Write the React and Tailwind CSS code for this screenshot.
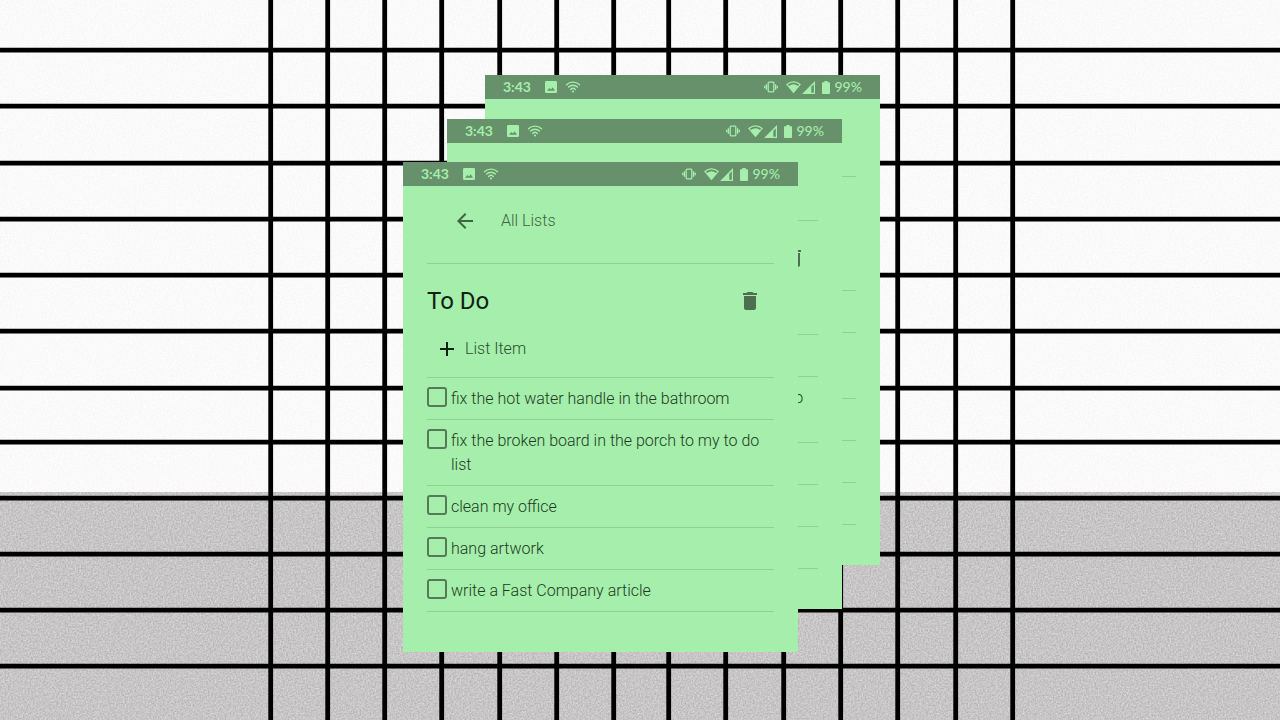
import React, { useState } from 'react'
import { MdAdd, MdArrowBack, MdDelete } from 'react-icons/md'

const columns = [271, 328, 385, 442, 500, 557, 614, 669, 726, 784, 841, 898, 956, 1013]
const rows = [50, 106, 163, 219, 275, 331, 388, 442, 498, 554, 610, 666]

const todos = [
  'fix the hot water handle in the bathroom',
  'fix the broken board in the porch to my to do list',
  'clean my office',
  'hang artwork',
  'write a Fast Company article',
]

function Backdrop() {
  return (
    <svg className="absolute inset-0 h-full w-full" viewBox="0 0 1280 720" preserveAspectRatio="xMidYMid slice" aria-hidden="true">
      <defs>
        <filter id="grain" x="0" y="0" width="100%" height="100%" colorInterpolationFilters="sRGB">
          <feTurbulence type="fractalNoise" baseFrequency="0.6" numOctaves="2" seed="4" />
          <feColorMatrix values="1.6 0 0 0 -0.3  1.6 0 0 0 -0.3  1.6 0 0 0 -0.3  0 0 0 0 1" />
        </filter>
      </defs>
      <rect width="1280" height="720" fill="#fff" />
      <rect y="492" width="1280" height="228" fill="#d5d2d3" />
      <rect width="1280" height="492" filter="url(#grain)" opacity="0.03" />
      <rect y="492" width="1280" height="228" filter="url(#grain)" opacity="0.15" />
      <g stroke="#000" strokeWidth="4.8">
        {columns.map(x => <line key={x} x1={x - 0.3} x2={x - 0.3} y1="0" y2="720" />)}
        {rows.map(y => <line key={y} x1="0" x2="1280" y1={y + 0.2} y2={y + 0.2} />)}
      </g>
    </svg>
  )
}

function StatusBar() {
  return (
    <div className="flex h-6 items-center justify-between bg-[#66916a] pr-[18px] pl-[18px] font-['Lato',sans-serif] text-sm text-[#a5eeab]">
      <div className="flex items-center">
        <span className="font-bold">3:43</span>
        <svg className="ml-[14px] h-3 w-3" viewBox="0 0 12 12" fill="currentColor" aria-hidden="true">
          <path fillRule="evenodd" d="M1.2 0h9.6Q12 0 12 1.2v9.6Q12 12 10.8 12H1.2Q0 12 0 10.8V1.2Q0 0 1.2 0zM2 9.8h8L7.6 6.2 6 8.4 4.4 6.9z" />
        </svg>
        <svg className="ml-2 h-3 w-4" viewBox="0 0 16 12" fill="none" stroke="currentColor" strokeWidth="1.4" strokeLinecap="round" aria-hidden="true">
          <path d="M1.5 3.8a9.3 9.3 0 0 1 13 0M3.6 6.1a6.3 6.3 0 0 1 8.8 0M5.7 8.4a3.3 3.3 0 0 1 4.6 0" />
          <circle cx="8" cy="10.5" r="1.1" fill="currentColor" stroke="none" />
        </svg>
      </div>
      <div className="flex items-center">
        <svg className="h-3 w-[14px]" viewBox="0 0 14 12" fill="none" stroke="currentColor" strokeWidth="1.3" aria-hidden="true">
          <rect x="4.2" y="1.2" width="5.6" height="9.6" rx="0.8" />
          <path d="M2.4 3.2v5.6M0.7 4.7v2.6M11.6 3.2v5.6M13.3 4.7v2.6" />
        </svg>
        <svg className="ml-2 h-3 w-[15px]" viewBox="0 0 15 12" fill="currentColor" aria-hidden="true">
          <path fillRule="evenodd" d="M0 3.3Q7.5-2.8 15 3.3L7.5 12.3zM1.8 3.6l1.1 1.3q4.6-3.2 9.2 0l1.1-1.3Q7.5-.8 1.8 3.6z" />
        </svg>
        <svg className="ml-px h-[13px] w-[13px]" viewBox="0 0 12 12" fill="currentColor" aria-hidden="true">
          <path fillRule="evenodd" d="M12 0v12H0zM10.9 3L8.6 5.3v5.6h2.3z" />
        </svg>
        <svg className="ml-[7px] h-[13px] w-2" viewBox="0 0 8 13" fill="currentColor" aria-hidden="true">
          <path d="M2.4 0h3.2v1.2H7.3q.7 0 .7.7v10.4q0 .7-.7.7H.7Q0 13 0 12.3V1.9q0-.7.7-.7h1.7z" />
        </svg>
        <span className="ml-1 font-medium">99%</span>
      </div>
    </div>
  )
}

function TodoItem({ id, text }) {
  const [done, setDone] = useState(false)

  return (
    <li className="flex items-start gap-1 border-b border-[#90d097] pt-[9px] pb-2">
      <input
        id={id}
        type="checkbox"
        checked={done}
        onChange={e => setDone(e.target.checked)}
        className="h-5 w-5 shrink-0 appearance-none rounded-[3px] border-2 border-[#527b56] checked:bg-[#527b56]"
      />
      <label htmlFor={id} className="text-base leading-6 text-[#1c3b20]">{text}</label>
    </li>
  )
}

function ListCard({ name, className, behind }) {
  return (
    <section
      inert={behind}
      className={`col-start-1 row-start-1 w-[395px] self-start bg-[#a5eeab] font-['Roboto',sans-serif] font-light ${className}`}
    >
      <StatusBar />
      <div className="px-6 pb-10">
        <header className="border-b border-[#90d097] pb-2">
          <a href="#lists" className="flex h-[69px] items-center gap-6 pl-[26px] text-base text-[#3f6543]">
            <MdArrowBack size={24} />
            All Lists
          </a>
        </header>
        <div className="flex items-center justify-between pt-[21px] pr-3">
          <h2 className="text-2xl leading-8 font-normal text-[#0d2210]">To Do</h2>
          <button type="button" aria-label="Delete list" className="text-[#4c6f50]">
            <MdDelete size={24} />
          </button>
        </div>
        <div className="border-b border-[#90d097] pt-5 pb-4 pl-2">
          <button type="button" className="flex items-center gap-1.5 text-base leading-6 text-[#2a4e2e]">
            <MdAdd size={24} className="text-[#0d2210]" />
            List Item
          </button>
        </div>
        <ul>
          {todos.map((text, i) => <TodoItem key={text} id={`${name}-${i}`} text={text} />)}
        </ul>
      </div>
    </section>
  )
}

export default function App() {
  return (
    <main className="relative flex min-h-screen items-center justify-center overflow-hidden pt-[7px] pl-[3px]">
      <Backdrop />
      <div className="relative grid">
        <ListCard name="back" behind className="ml-[82px]" />
        <ListCard name="middle" behind className="mt-11 ml-11" />
        <ListCard name="front" className="mt-[87px]" />
      </div>
    </main>
  )
}
